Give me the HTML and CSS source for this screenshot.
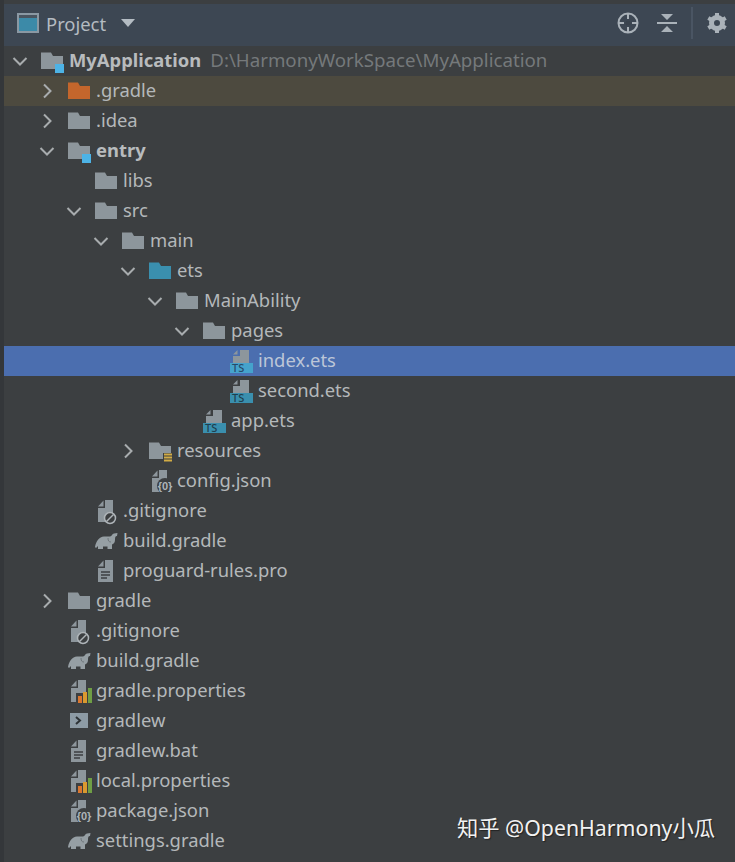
FILE: index.html
```html
<!DOCTYPE html>
<html lang="zh">
<head>
  <meta charset="UTF-8">
  <title>Project</title>
  <link rel="stylesheet" href="styles.css">
</head>
<body>
  <svg class="defs" width="0" height="0">
    <symbol id="chev-down" viewBox="0 0 16 16"><path d="M1.500 5l6.500 6.500L14.500 5" fill="none" stroke="currentColor" stroke-width="2"/></symbol>
    <symbol id="chev-right" viewBox="0 0 16 16"><path d="M5 1.500l6.500 6.500L5 14.500" fill="none" stroke="currentColor" stroke-width="2"/></symbol>
    <symbol id="folder" viewBox="0 0 26 26" overflow="visible"><path d="M0 4.500h10l2 3.500h10v13H0z" fill="currentColor"/></symbol>
    <symbol id="file" viewBox="0 0 26 26" overflow="visible">
      <path d="M10 2h8v22H3V10h7z" fill="#8d969c"/><path d="M3 8.500L8.500 2.500v6z" fill="#8d969c"/>
    </symbol>
    <symbol id="text" viewBox="0 0 26 26" overflow="visible">
      <use href="#file"/><path d="M6 14h9M6 17h9M6 20h6" stroke="#3c3f41" stroke-width="1.300"/>
    </symbol>
    <symbol id="elephant" viewBox="0 0 26 26" overflow="visible">
      <path d="M0 19C1 13 4 9 9 8.500h6c2-.5 2-2.500 4-3l3.500-.5-.5 3c-2 0-2 2-2 4 0 3-2 4-3 4.500V21h-4.500v-2.500H8V21H3v-3l-2 2z" fill="#969fa4"/>
      <path d="M13 10c0 3 1 4 3 4" fill="none" stroke="#6f777c" stroke-width="1"/>
    </symbol>
    <symbol id="ignore" viewBox="0 0 26 26" overflow="visible">
      <use href="#file"/><circle cx="15" cy="20" r="5.500" fill="#3c3f41" stroke="#aeb4b8" stroke-width="1.500"/><path d="M11.500 23.500l7-7" stroke="#aeb4b8" stroke-width="1.500"/>
    </symbol>
    <symbol id="props" viewBox="0 0 26 26" overflow="visible">
      <use href="#file"/><path d="M8 15h17v11H8z" fill="#3c3f41"/>
      <path d="M10 18h4v7h-4z" fill="#d9762f"/><path d="M15 14h4v11h-4z" fill="#d99a2f"/><path d="M20 10h4v15h-4z" fill="#6f9e45"/>
    </symbol>
    <symbol id="json-base" viewBox="0 0 26 26" overflow="visible">
      <use href="#file"/><circle cx="16" cy="18" r="8" fill="#3c3f41"/>
    </symbol>
    <symbol id="script" viewBox="0 0 26 26" overflow="visible">
      <path d="M2 5h18v15H2z" fill="#8d9ba5"/><path d="M8 9l4 3.500-4 3.500" fill="none" stroke="#2e3336" stroke-width="2"/>
    </symbol>
    <symbol id="ts-base" viewBox="0 0 26 26" overflow="visible">
      <path d="M10 2h9v13H3V8h7z" fill="#8d969c"/><path d="M3 6.500L7.500 2v4.500z" fill="#8d969c"/>
      <path d="M0 15h23v10H0z" fill="currentColor"/>
    </symbol>
  </svg>

  <div class="panel">
    <header class="toolbar">
      <svg class="view-icon" width="22" height="20" viewBox="0 0 22 20"><path d="M1 1h20v18H1z" fill="#3c8aa8" stroke="#8a98a3" stroke-width="2"/><path d="M2 2h18v3H2z" fill="#4a5560"/></svg>
      <span class="toolbar-title">Project</span>
      <svg class="caret" width="14" height="8" viewBox="0 0 14 8"><path d="M0 0h14L7 8z" fill="#b4bcc3"/></svg>
      <div class="toolbar-actions">
        <svg width="24" height="24" viewBox="0 0 24 24"><circle cx="12" cy="12" r="9.500" fill="none" stroke="#aab2b9" stroke-width="2"/><path d="M12 2v6M12 16v6M2 12h6M16 12h6" stroke="#aab2b9" stroke-width="2"/><circle cx="12" cy="12" r="2.500" fill="#39424d"/></svg>
        <svg class="collapse" width="22" height="24" viewBox="0 0 22 24"><path d="M1 12h20" stroke="#aab2b9" stroke-width="2"/><path d="M5 3h12l-6 6zM5 21h12l-6-6z" fill="#aab2b9"/></svg>
        <span class="divider"></span>
        <svg class="gear" width="22" height="22" viewBox="0 0 22 22"><circle cx="11" cy="11" r="5.500" fill="none" stroke="#aab2b9" stroke-width="5"/><path d="M11 1v4M11 17v4M2.300 6l3.500 2M16.200 14l3.500 2M2.300 16l3.500-2M16.200 8l3.500-2" stroke="#aab2b9" stroke-width="4"/></svg>
      </div>
    </header>

    <div class="tree">
      <div class="row d0"><svg class="chev"><use href="#chev-down"/></svg><svg class="icon folder"><use href="#folder"/><rect class="mod" x="14" y="16" width="9" height="9"/></svg><b>MyApplication</b><span class="path">D:\HarmonyWorkSpace\MyApplication</span></div>
      <div class="row d1 excluded"><svg class="chev"><use href="#chev-right"/></svg><svg class="icon folder orange"><use href="#folder"/></svg>.gradle</div>
      <div class="row d1"><svg class="chev"><use href="#chev-right"/></svg><svg class="icon folder"><use href="#folder"/></svg>.idea</div>
      <div class="row d1"><svg class="chev"><use href="#chev-down"/></svg><svg class="icon folder"><use href="#folder"/><rect class="mod" x="14" y="16" width="9" height="9"/></svg><b>entry</b></div>
      <div class="row d2"><span class="chev"></span><svg class="icon folder"><use href="#folder"/></svg>libs</div>
      <div class="row d2"><svg class="chev"><use href="#chev-down"/></svg><svg class="icon folder"><use href="#folder"/></svg>src</div>
      <div class="row d3"><svg class="chev"><use href="#chev-down"/></svg><svg class="icon folder"><use href="#folder"/></svg>main</div>
      <div class="row d4"><svg class="chev"><use href="#chev-down"/></svg><svg class="icon folder teal"><use href="#folder"/></svg>ets</div>
      <div class="row d5"><svg class="chev"><use href="#chev-down"/></svg><svg class="icon folder"><use href="#folder"/></svg>MainAbility</div>
      <div class="row d6"><svg class="chev"><use href="#chev-down"/></svg><svg class="icon folder"><use href="#folder"/></svg>pages</div>
      <div class="row d7 selected"><span class="chev"></span><svg class="icon teal"><use href="#ts-base"/><text class="ts-mark" x="2" y="24">TS</text></svg>index.ets</div>
      <div class="row d7"><span class="chev"></span><svg class="icon teal"><use href="#ts-base"/><text class="ts-mark" x="2" y="24">TS</text></svg>second.ets</div>
      <div class="row d6"><span class="chev"></span><svg class="icon teal"><use href="#ts-base"/><text class="ts-mark" x="2" y="24">TS</text></svg>app.ets</div>
      <div class="row d4"><svg class="chev"><use href="#chev-right"/></svg><svg class="icon folder"><use href="#folder"/><path d="M14 15h10v10H14z" fill="#3c3f41"/><path d="M15 16.500h8M15 19.500h8M15 22.500h8" stroke="#d2ac45" stroke-width="2"/></svg>resources</div>
      <div class="row d4"><span class="chev"></span><svg class="icon"><use href="#json-base"/><text class="json-mark" x="16" y="22" text-anchor="middle">{0}</text></svg>config.json</div>
      <div class="row d2"><span class="chev"></span><svg class="icon"><use href="#ignore"/></svg>.gitignore</div>
      <div class="row d2"><span class="chev"></span><svg class="icon"><use href="#elephant"/></svg>build.gradle</div>
      <div class="row d2"><span class="chev"></span><svg class="icon"><use href="#text"/></svg>proguard-rules.pro</div>
      <div class="row d1"><svg class="chev"><use href="#chev-right"/></svg><svg class="icon folder"><use href="#folder"/></svg>gradle</div>
      <div class="row d1"><span class="chev"></span><svg class="icon"><use href="#ignore"/></svg>.gitignore</div>
      <div class="row d1"><span class="chev"></span><svg class="icon"><use href="#elephant"/></svg>build.gradle</div>
      <div class="row d1"><span class="chev"></span><svg class="icon"><use href="#props"/></svg>gradle.properties</div>
      <div class="row d1"><span class="chev"></span><svg class="icon"><use href="#script"/></svg>gradlew</div>
      <div class="row d1"><span class="chev"></span><svg class="icon"><use href="#text"/></svg>gradlew.bat</div>
      <div class="row d1"><span class="chev"></span><svg class="icon"><use href="#props"/></svg>local.properties</div>
      <div class="row d1"><span class="chev"></span><svg class="icon"><use href="#json-base"/><text class="json-mark" x="16" y="22" text-anchor="middle">{0}</text></svg>package.json</div>
      <div class="row d1"><span class="chev"></span><svg class="icon"><use href="#elephant"/></svg>settings.gradle</div>
    </div>
  </div>

  <div class="watermark">知乎 @OpenHarmony小瓜</div>
</body>
</html>
```

FILE: styles.css
```css
html, body { margin: 0; height: 862px; overflow: hidden; background: #3c3f41; }
body { position: relative; font-family: "Noto Sans", "Open Sans", sans-serif; font-size: 18.4px; color: #b4b8ba; }
.defs { display: block; height: 0; }

.panel { height: 862px; box-sizing: border-box; padding-top: 4px; border-left: 4px solid #34373a; }

.toolbar { display: flex; align-items: center; height: 42px; box-sizing: border-box; padding: 0 0 4px 13px; background: #3d4753; }
.view-icon { margin-right: 7px; }
.toolbar-title { color: #b4bbc1; }
.caret { margin-left: 15px; }
.toolbar-actions { display: flex; align-items: center; margin-left: auto; padding-right: 7px; }
.collapse { margin-left: 16px; }
.divider { width: 2px; height: 32px; margin: 0 13px; background: #4a5563; }

.row { display: flex; align-items: center; height: 30px; box-sizing: border-box; padding-bottom: 4px; white-space: nowrap; }
.row b { font-weight: 700; color: #b8bbbd; }
.path { margin-left: 9px; font-size: 18.7px; color: #75797b; }
.d0 { padding-left: 8px; }
.d1 { padding-left: 35px; }
.d2 { padding-left: 62px; }
.d3 { padding-left: 89px; }
.d4 { padding-left: 116px; }
.d5 { padding-left: 143px; }
.d6 { padding-left: 170px; }
.d7 { padding-left: 197px; }
.excluded { background: #4d4a3f; }
.selected { background: #4b6eaf; color: #bcc6d8; }

.chev { flex: none; width: 16px; height: 16px; margin: 4px 13px 0 0; color: #a8acae; }
.icon { flex: none; width: 26px; height: 26px; margin: 4px 2px 0 0; overflow: visible; color: #8d969c; }
.orange { color: #c4662c; }
.teal { color: #3a8fae; }
.selected .teal { color: #45a3cc; }
.mod { fill: #4db3e6; }
.ts-mark { font: 500 11px "Noto Sans", sans-serif; fill: #1f3f4f; }
.selected .ts-mark { fill: #274a6a; }
.json-mark { font: 700 11px "Liberation Sans", sans-serif; fill: #aeb4b8; }

.watermark { position: absolute; right: 20px; top: 812px; font-size: 21.3px; line-height: 32px; color: #f2f2f2; text-shadow: 1px 1px 1px #222; font-family: "Noto Sans", "Noto Sans CJK SC", sans-serif; }
```
